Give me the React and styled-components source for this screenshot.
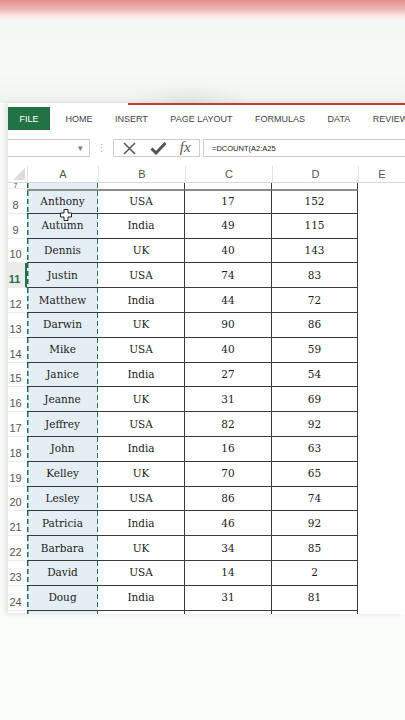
import React from 'react'
import styled, { createGlobalStyle } from 'styled-components'

const GlobalStyle = createGlobalStyle`
  body{
    margin: 0;
    background: #fbfdfb;
    font-family: "Liberation Sans", Arial, sans-serif;
  }
`

const rows = [
  [8, 'Anthony', 'USA', 17, 152],
  [9, 'Autumn', 'India', 49, 115],
  [10, 'Dennis', 'UK', 40, 143],
  [11, 'Justin', 'USA', 74, 83],
  [12, 'Matthew', 'India', 44, 72],
  [13, 'Darwin', 'UK', 90, 86],
  [14, 'Mike', 'USA', 40, 59],
  [15, 'Janice', 'India', 27, 54],
  [16, 'Jeanne', 'UK', 31, 69],
  [17, 'Jeffrey', 'USA', 82, 92],
  [18, 'John', 'India', 16, 63],
  [19, 'Kelley', 'UK', 70, 65],
  [20, 'Lesley', 'USA', 86, 74],
  [21, 'Patricia', 'India', 46, 92],
  [22, 'Barbara', 'UK', 34, 85],
  [23, 'David', 'USA', 14, 2],
  [24, 'Doug', 'India', 31, 81],
]

const tabs = ['HOME', 'INSERT', 'PAGE LAYOUT', 'FORMULAS', 'DATA', 'REVIEW']

const App = () => {
  return (
    <Page>
      <GlobalStyle />
      <TopGlow />
      <Haze />
      <Window>
        <RedStrip>
          <div />
          <span />
        </RedStrip>
        <TabBar>
          <FileTab>FILE</FileTab>
          {tabs.map(t => <Tab key={t}>{t}</Tab>)}
        </TabBar>
        <FormulaBar>
          <NameBox><span>▾</span></NameBox>
          <Dots>⋮</Dots>
          <FxButtons>
            <svg width="15" height="15" viewBox="0 0 15 15">
              <path d="M2 2 L13 13 M13 2 L2 13" stroke="#555" strokeWidth="1.5" fill="none" />
            </svg>
            <svg width="17" height="14" viewBox="0 0 17 14">
              <path d="M1.5 7.5 L6 12 L15.5 2" stroke="#555" strokeWidth="3" fill="none" />
            </svg>
            <Fx>fx</Fx>
          </FxButtons>
          <FormulaInput>=DCOUNT(A2:A25</FormulaInput>
        </FormulaBar>
        <Sheet>
          <Corner><svg width="12" height="12" viewBox="0 0 12 12"><path d="M12 0 L12 12 L0 12 Z" fill="#dcdcdc" /></svg></Corner>
          {['A', 'B', 'C', 'D', 'E'].map(c => <ColHead key={c}>{c}</ColHead>)}

          <RowHead $partial>7</RowHead>
          <Cell $a $top />
          <Cell $top />
          <Cell $top />
          <Cell $top />
          <Blank />

          {rows.map(([n, name, country, c, d]) => (
            <React.Fragment key={n}>
              <RowHead $active={n === 11}>{n}</RowHead>
              <Cell $a $first={n === 8}>{name}</Cell>
              <Cell $first={n === 8}>{country}</Cell>
              <Cell $first={n === 8}>{c}</Cell>
              <Cell $first={n === 8}>{d}</Cell>
              <Blank />
            </React.Fragment>
          ))}

          <RowHead $tail />
          <Cell $a $tail />
          <Cell $tail />
          <Cell $tail />
          <Cell $tail />
          <Blank />
        </Sheet>
      </Window>
      <Cursor>
        <svg width="12" height="12" viewBox="0 0 12 12">
          <path d="M4 0.5 H8 V4 H11.5 V8 H8 V11.5 H4 V8 H0.5 V4 H4 Z" fill="#fff" stroke="#222" strokeWidth="1" />
        </svg>
      </Cursor>
    </Page>
  )
}

export default App

const Page = styled.div`
  position: relative;
  width: 405px;
  height: 720px;
  overflow: hidden;
  background: #fbfdfb;
`

const TopGlow = styled.div`
  height: 22px;
  background: linear-gradient(to bottom, #e38f8d 0%, #eeb4b2 40%, #faeaea 75%, #f6faf7 100%);
`

const Haze = styled.div`
  height: 81px;
  background:
    radial-gradient(ellipse 60px 14px at 190px 96%, rgba(185,200,190,0.3), transparent),
    linear-gradient(to bottom, #f5f9f6, #f7fbf8 60%, #eff3f0);
`

const Window = styled.div`
  margin-left: 8px;
  background: #fff;
  box-shadow: -3px 0 5px rgba(0,0,0,0.10);
`

const RedStrip = styled.div`
  display: flex;
  height: 3px;
  div{ width: 120px; }
  span{
    flex: 1;
    height: 2px;
    background: #c63a36;
  }
`

const TabBar = styled.div`
  display: flex;
  align-items: center;
  gap: 22.5px;
  height: 25px;
  white-space: nowrap;
  overflow: hidden;
`

const FileTab = styled.div`
  flex-shrink: 0;
  display: flex;
  align-items: center;
  justify-content: center;
  width: 42px;
  height: 23px;
  margin-right: -7px;
  background: #217346;
  color: #fff;
  font-size: 9px;
`

const Tab = styled.div`
  flex-shrink: 0;
  font-size: 9px;
  color: #444;
`

const FormulaBar = styled.div`
  display: flex;
  align-items: center;
  height: 20px;
  margin-top: 7px;
  margin-bottom: 8px;
`

const NameBox = styled.div`
  display: flex;
  align-items: center;
  justify-content: flex-end;
  width: 82px;
  height: 18px;
  box-sizing: border-box;
  border: 1px solid #cfcfcf;
  border-left: none;
  span{
    font-size: 9px;
    color: #777;
    margin-right: 6px;
  }
`

const Dots = styled.div`
  width: 23px;
  text-align: center;
  font-size: 11px;
  color: #aaa;
`

const FxButtons = styled.div`
  display: flex;
  align-items: center;
  justify-content: space-around;
  width: 87px;
  height: 18px;
  box-sizing: border-box;
  border: 1px solid #cfcfcf;
  padding: 0 2px;
`

const Fx = styled.span`
  font-family: "Liberation Serif", "Times New Roman", serif;
  font-style: italic;
  font-size: 15px;
  color: #555;
  margin-top: -2px;
`

const FormulaInput = styled.div`
  flex: 1;
  height: 18px;
  margin-left: 3px;
  box-sizing: border-box;
  border: 1px solid #cfcfcf;
  border-right: none;
  padding-left: 8px;
  display: flex;
  align-items: center;
  font-size: 7.5px;
  color: #222;
  white-space: nowrap;
  overflow: hidden;
`

const Sheet = styled.div`
  display: grid;
  grid-template-columns: 19px 71px 87px 87px 86px 1fr;
  grid-template-rows: 17px 6px repeat(17, 24.8px) 3px;
`

const Corner = styled.div`
  display: flex;
  align-items: flex-end;
  justify-content: flex-end;
  padding: 0 2px 2px 0;
  border-bottom: 1px solid #d8d8d8;
`

const ColHead = styled.div`
  display: flex;
  align-items: center;
  justify-content: center;
  font-size: 11px;
  color: #555;
  border-left: 1px solid #e4e4e4;
  border-bottom: 1px solid #d8d8d8;
  box-sizing: border-box;
`

const RowHead = styled.div`
  display: flex;
  align-items: ${p => (p.$partial ? 'flex-start' : 'flex-end')};
  justify-content: center;
  padding-right: 4px;
  padding-bottom: 2px;
  box-sizing: border-box;
  overflow: hidden;
  font-size: 11px;
  line-height: 12px;
  color: ${p => (p.$active ? '#217346' : '#555')};
  font-weight: ${p => (p.$active ? 700 : 400)};
  background: ${p => (p.$active ? '#ececec' : '#fff')};
  border-right: ${p => (p.$active ? '2px solid #217346' : 'none')};
  border-bottom: 1px solid #ececec;
  ${p => p.$partial && 'padding-bottom: 0; line-height: 6px; font-size: 7px;'}
`

const dash = side => `repeating-linear-gradient(to bottom, #22705a 0 5px, transparent 5px 8px) ${side} top / 1.5px 100% no-repeat`

const Cell = styled.div`
  display: flex;
  align-items: center;
  justify-content: center;
  box-sizing: border-box;
  font-family: "DejaVu Serif", "Liberation Serif", serif;
  font-size: 10.5px;
  color: #1c1c1c;
  border-right: ${p => (p.$a ? 'none' : '1px solid #3a3a3a')};
  border-bottom: ${p => (p.$tail || p.$top ? 'none' : '1px solid #3a3a3a')};
  border-top: ${p => (p.$first ? '2px solid #8c8c8c' : 'none')};
  background: ${p => (p.$a ? `${dash('left')}, ${dash('right')}, #e4eef4` : '#fff')};
  padding-bottom: 1px;
`

const Blank = styled.div`
  background: #fff;
`

const Cursor = styled.div`
  position: absolute;
  left: 60px;
  top: 209px;
  line-height: 0;
`
